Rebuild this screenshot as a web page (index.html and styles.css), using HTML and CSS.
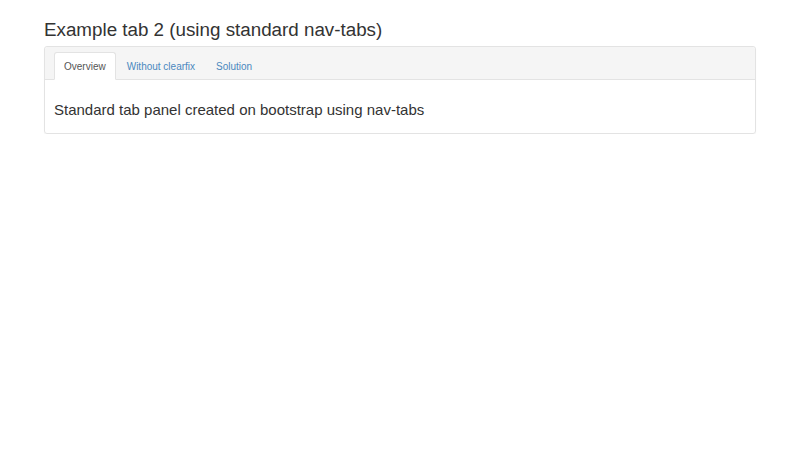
FILE: index.html
```html
<!DOCTYPE html>
<html lang="en">
<head>
    <meta charset="UTF-8">
    <meta name="viewport" content="width=device-width, initial-scale=1.0">
    <title>Tabs</title>
    <link rel="stylesheet" href="styles.css">
</head>
<body>
    <div class="container">
        <h3 class="title">Example tab 2 (using standard nav-tabs)</h3>
        <div class="panel">
            <div class="panel-heading">
                <ul class="nav-tabs">
                    <li class="active"><a href="#overview">Overview</a></li>
                    <li><a href="#clearfix">Without clearfix</a></li>
                    <li><a href="#solution">Solution</a></li>
                </ul>
            </div>
            <div class="panel-body">
                <h4>Standard tab panel created on bootstrap using nav-tabs</h4>
            </div>
        </div>
    </div>
</body>
</html>
```

FILE: styles.css
```css
body {
    margin: 0;
    background-color: #fff;
    font-family: "Liberation Sans", Arial, sans-serif;
    color: #333;
}
.container {
    padding: 0 44px;
}
.title {
    margin: 19px 0 6px;
    font-size: 18.8px;
    font-weight: 400;
    line-height: 21px;
}
.panel {
    border: 1px solid #e3e3e3;
    border-radius: 3px;
    box-shadow: 0 1px 1px rgba(0, 0, 0, 0.05);
}
.panel-heading {
    background-color: #f5f5f5;
    border-bottom: 1px solid #e3e3e3;
    padding: 5px 9px 0;
    border-radius: 3px 3px 0 0;
}
.nav-tabs {
    list-style: none;
    margin: 0 0 -1px;
    padding: 0;
    display: flex;
}
.nav-tabs li a {
    display: block;
    padding: 8px 9px 6px;
    font-size: 10px;
    line-height: 12px;
    color: #4a88be;
    text-decoration: none;
    border: 1px solid transparent;
    border-radius: 3px 3px 0 0;
    margin-right: 1px;
}
.nav-tabs li.active a {
    color: #555;
    background-color: #fff;
    border-color: #e3e3e3 #e3e3e3 transparent;
}
.panel-body {
    padding: 21px 9px 15px;
}
.panel-body h4 {
    margin: 0;
    font-size: 15px;
    font-weight: 400;
    line-height: 17px;
}
```
